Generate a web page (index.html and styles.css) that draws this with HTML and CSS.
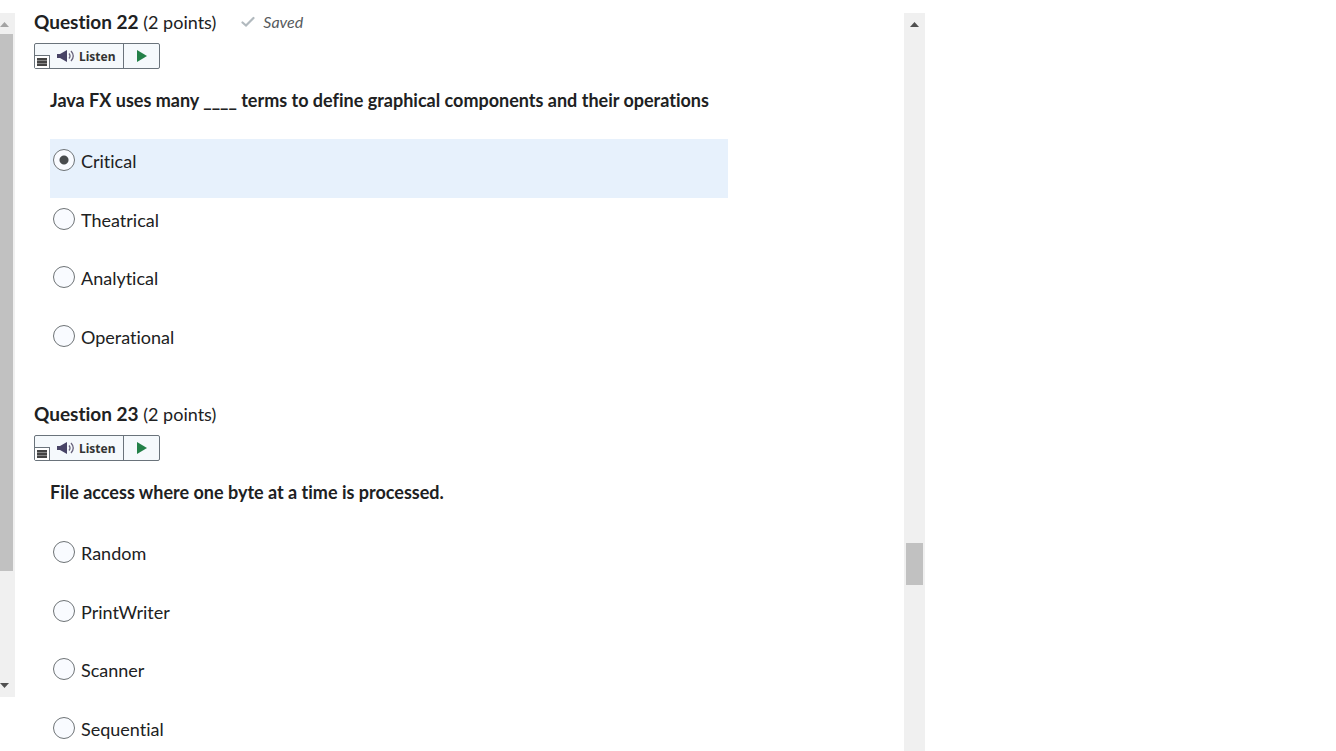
FILE: index.html
```html
<!DOCTYPE html>
<html lang="en">
<head>
    <meta charset="UTF-8">
    <meta name="viewport" content="width=device-width, initial-scale=1.0">
    <title>Quiz</title>
    <link rel="stylesheet" href="styles.css">
</head>
<body>
    <div class="page">
        <!-- Left scrollbar -->
        <div class="scrollbar scrollbar-left">
            <svg class="arrow" width="9" height="5" viewBox="0 0 9 5"><path d="M0 5L4.500 0L9 5z" fill="#a3a3a3"/></svg>
            <div class="thumb"></div>
            <svg class="arrow arrow-down" width="9" height="5" viewBox="0 0 9 5"><path d="M0 0h9L4.500 5z" fill="#505050"/></svg>
        </div>

        <main class="quiz">
            <!-- Question 22 -->
            <section class="question">
                <div class="question-head">
                    <h2>Question 22 <span>(2 points)</span></h2>
                    <p class="saved">
                        <svg width="14" height="12" viewBox="0 0 14 12"><path d="M1.500 6.500L5 9.500L12.500 2" fill="none" stroke="#b1b9be" stroke-width="2.200" stroke-linecap="round"/></svg>
                        Saved
                    </p>
                </div>
                <div class="reader">
                    <button class="menu-btn" aria-label="Reader menu"><svg width="10" height="8" viewBox="0 0 10 8"><path d="M0 1h10M0 4h10M0 7h10" stroke="#444" stroke-width="2"/><path d="M0 2.500h10M0 5.500h10" stroke="#888"/></svg></button>
                    <button class="listen-btn">
                        <svg width="18" height="14" viewBox="0 0 18 14"><path d="M0 5h3L10 1v12L3 9H0z" fill="#484466"/><path d="M12 4.500q2 2.500 0 5M14 2q4.500 5 0 10" fill="none" stroke="#68637c" stroke-width="1.300"/></svg>
                        Listen
                    </button>
                    <button class="play-btn" aria-label="Play"><svg width="10" height="12" viewBox="0 0 10 12"><path d="M0 0l10 6L0 12z" fill="#238048"/></svg></button>
                </div>
                <p class="question-text" id="text22">Java FX uses many ____ terms to define graphical components and their operations</p>
                <div class="options" role="radiogroup" aria-labelledby="text22">
                    <label class="option"><input type="radio" name="q22" checked><span>Critical</span></label>
                    <label class="option"><input type="radio" name="q22"><span>Theatrical</span></label>
                    <label class="option"><input type="radio" name="q22"><span>Analytical</span></label>
                    <label class="option"><input type="radio" name="q22"><span>Operational</span></label>
                </div>
            </section>

            <!-- Question 23 -->
            <section class="question">
                <div class="question-head">
                    <h2>Question 23 <span>(2 points)</span></h2>
                </div>
                <div class="reader">
                    <button class="menu-btn" aria-label="Reader menu"><svg width="10" height="8" viewBox="0 0 10 8"><path d="M0 1h10M0 4h10M0 7h10" stroke="#444" stroke-width="2"/><path d="M0 2.500h10M0 5.500h10" stroke="#888"/></svg></button>
                    <button class="listen-btn">
                        <svg width="18" height="14" viewBox="0 0 18 14"><path d="M0 5h3L10 1v12L3 9H0z" fill="#484466"/><path d="M12 4.500q2 2.500 0 5M14 2q4.500 5 0 10" fill="none" stroke="#68637c" stroke-width="1.300"/></svg>
                        Listen
                    </button>
                    <button class="play-btn" aria-label="Play"><svg width="10" height="12" viewBox="0 0 10 12"><path d="M0 0l10 6L0 12z" fill="#238048"/></svg></button>
                </div>
                <p class="question-text" id="text23">File access where one byte at a time is processed.</p>
                <div class="options" role="radiogroup" aria-labelledby="text23">
                    <label class="option"><input type="radio" name="q23"><span>Random</span></label>
                    <label class="option"><input type="radio" name="q23"><span>PrintWriter</span></label>
                    <label class="option"><input type="radio" name="q23"><span>Scanner</span></label>
                    <label class="option"><input type="radio" name="q23"><span>Sequential</span></label>
                </div>
            </section>
        </main>

        <!-- Right scrollbar -->
        <div class="scrollbar scrollbar-right">
            <svg class="arrow" width="9" height="5" viewBox="0 0 9 5"><path d="M0 5L4.500 0L9 5z" fill="#505050"/></svg>
            <div class="thumb"></div>
        </div>
    </div>
</body>
</html>
```
FILE: styles.css
```css
* { box-sizing: border-box; }
body { margin: 0; background: #fff; color: #202122; font-family: Lato, sans-serif; font-size: 18px; line-height: 24px; font-variant-ligatures: none; }
h2, p { margin: 0; }
svg { display: block; flex: none; }

.page { display: grid; grid-template-columns: 15px minmax(0, 1fr) 21px 411px; grid-template-rows: minmax(0, 1fr); height: 100vh; padding-top: 13px; overflow: hidden; }

.scrollbar { display: flex; flex-direction: column; background: #f0f0f0; }
.scrollbar .thumb { background: #c1c1c1; }
.scrollbar-left { margin-bottom: 54px; padding: 9px 2px 9px 0; }
.scrollbar-left .thumb { height: 537px; margin-top: 7px; }
.arrow-down { margin-top: auto; }
.scrollbar-right { padding: 9px 2px; }
.scrollbar-right .arrow { margin: 0 4px; }
.scrollbar-right .thumb { height: 42px; margin-top: 516px; }

.quiz { padding-left: 19px; }
.question { padding-bottom: 32px; }
.question-head { display: flex; height: 30px; }
h2 { font-size: 19px; line-height: 18px; font-weight: 700; }
h2 span { font-size: 18px; font-weight: 400; }
.saved { display: flex; align-items: center; gap: 8px; height: 18px; margin-left: 25px; color: #565a5c; font-size: 16px; font-style: italic; }

.reader { display: flex; width: 126px; height: 26px; border: 1px solid #6a737b; border-radius: 2px; background: #f5f9fc; }
.reader button { display: flex; align-items: center; margin: 0; padding: 0; border: 0; background: none; cursor: pointer; }
.reader .menu-btn { align-self: flex-end; justify-content: center; width: 15px; height: 13px; border: solid #6a737b; border-width: 1px 1px 0 0; background: #fff; }
.reader .listen-btn { gap: 4px; padding-left: 7px; width: 73px; color: #333; font: 700 12px "Noto Sans", sans-serif; }
.reader .play-btn { flex: 1; justify-content: center; border-left: 1px solid #6a737b; }

.question-text { margin: 19px 0 27px 16px; font-weight: 700; }
.options { display: grid; grid-template-rows: repeat(4, 1fr); height: 234px; max-width: 678px; margin-left: 16px; }
.option { display: flex; align-items: flex-start; gap: 6px; padding: 10px 3px; }
.option:has(input:checked) { background: #e7f1fc; }
.option input { appearance: none; flex: none; width: 22px; height: 22px; margin: 0; border: 1px solid #6e7376; border-radius: 50%; background: #f9fbff; }
.option input:checked { background: radial-gradient(circle, #494c4e 4px, #f9fbff 5px); }
```
